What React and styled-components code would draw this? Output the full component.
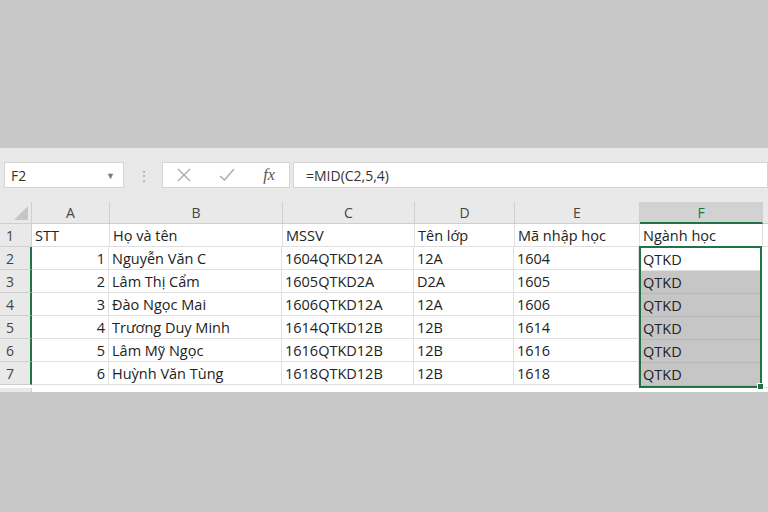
import styled, { createGlobalStyle } from "styled-components";

const Global = createGlobalStyle`
  body { margin: 0; background: #c8c8c8; font-family: "Open Sans", "Liberation Sans", sans-serif; }
`;

const cols = [
  { k: "A", w: 78 },
  { k: "B", w: 173 },
  { k: "C", w: 132 },
  { k: "D", w: 100 },
  { k: "E", w: 125 },
  { k: "F", w: 123 },
  { k: "", w: 40 },
];

const rows = [
  ["STT", "Họ và tên", "MSSV", "Tên lớp", "Mã nhập học", "Ngành học"],
  ["1", "Nguyễn Văn C", "1604QTKD12A", "12A", "1604", "QTKD"],
  ["2", "Lâm Thị Cẩm", "1605QTKD2A", "D2A", "1605", "QTKD"],
  ["3", "Đào Ngọc Mai", "1606QTKD12A", "12A", "1606", "QTKD"],
  ["4", "Trương Duy Minh", "1614QTKD12B", "12B", "1614", "QTKD"],
  ["5", "Lâm Mỹ Ngọc", "1616QTKD12B", "12B", "1616", "QTKD"],
  ["6", "Huỳnh Văn Tùng", "1618QTKD12B", "12B", "1618", "QTKD"],
];

const Page = styled.div`
  height: 512px;
  display: flex;
  flex-direction: column;
  padding-top: 148px;
  box-sizing: border-box;
`;
const Sheet = styled.div`
  background: #e9e9e9;
  height: 244px;
  overflow: hidden;
`;
const Toolbar = styled.div`
  display: flex;
  align-items: center;
  height: 26px;
  margin: 14px 0 14px 4px;
  gap: 3px;
`;
const NameBox = styled.div`
  width: 120px;
  height: 26px;
  background: #fff;
  border: 1px solid #d4d4d4;
  box-sizing: border-box;
  display: flex;
  align-items: center;
  justify-content: space-between;
  padding: 0 8px 0 6px;
  font-size: 14px;
  color: #333;
`;
const Dots = styled.div`
  width: 32px;
  text-align: center;
  color: #aaa;
  font-size: 14px;
  letter-spacing: -2px;
`;
const IconBox = styled.div`
  width: 128px;
  height: 26px;
  background: #fff;
  border: 1px solid #d4d4d4;
  box-sizing: border-box;
  display: flex;
  align-items: center;
  justify-content: space-around;
  color: #999;
`;
const Fx = styled.span`
  font-family: "Liberation Serif", serif;
  font-style: italic;
  color: #555;
  font-size: 16px;
`;
const Formula = styled.div`
  flex: 1;
  height: 26px;
  background: #fff;
  border: 1px solid #d4d4d4;
  box-sizing: border-box;
  display: flex;
  align-items: center;
  padding-left: 12px;
  font-size: 14px;
  color: #333;
`;
const Grid = styled.div`
  background: #fff;
`;
const Row = styled.div`
  display: flex;
  height: ${(p) => p.h}px;
`;
const Head = styled.div`
  width: ${(p) => p.w}px;
  flex: none;
  box-sizing: border-box;
  background: ${(p) => (p.sel ? "#d2d2d2" : "#e9e9e9")};
  color: ${(p) => (p.sel ? "#217346" : "#444")};
  border-right: 1px solid #cfcfcf;
  border-bottom: ${(p) => (p.sel ? "2px solid #217346" : "1px solid #cfcfcf")};
  display: flex;
  align-items: center;
  justify-content: ${(p) => (p.left ? "flex-start" : "center")};
  padding-left: ${(p) => (p.left ? 6 : 0)}px;
  font-size: 14px;
`;
const Corner = styled(Head)`
  position: relative;
  &::after {
    content: "";
    position: absolute;
    right: 3px;
    bottom: 3px;
    border-left: 14px solid transparent;
    border-bottom: 14px solid #c6c6c6;
  }
`;
const Cell = styled.div`
  width: ${(p) => p.w}px;
  flex: none;
  box-sizing: border-box;
  border-right: 1px solid #e0e0e0;
  border-bottom: 1px solid #e0e0e0;
  background: ${(p) => (p.shade ? "#c6c6c6" : "#fff")};
  display: flex;
  align-items: center;
  justify-content: ${(p) => (p.right ? "flex-end" : "flex-start")};
  padding: 0 3px;
  font-size: 14.5px;
  color: #222;
  white-space: nowrap;
`;
const Sel = styled.div`
  position: relative;
  width: 123px;
  flex: none;
  border: 2px solid #217346;
  box-sizing: border-box;
  margin-top: -1px;
  &::after {
    content: "";
    position: absolute;
    right: -4px;
    bottom: -4px;
    width: 5px;
    height: 5px;
    background: #217346;
    border: 1px solid #fff;
  }
`;
const SelCell = styled.div`
  height: 23px;
  background: ${(p) => (p.shade ? "#c6c6c6" : "#fff")};
  border-bottom: 1px solid ${(p) => (p.shade ? "#b8b8b8" : "#e0e0e0")};
  box-sizing: border-box;
  display: flex;
  align-items: center;
  padding-left: 2px;
  font-size: 14.5px;
  color: #222;
`;
const Body = styled.div`
  display: flex;
`;
const Left = styled.div``;

export default function App() {
  return (
    <>
      <Global />
      <Page>
        <Sheet>
          <Toolbar>
            <NameBox>
              <span>F2</span>
              <span style={{ fontSize: 9, color: "#777" }}>▼</span>
            </NameBox>
            <Dots>⋮</Dots>
            <IconBox>
              <svg width="14" height="14" viewBox="0 0 14 14" stroke="#aaa" strokeWidth="1.4">
                <path d="M1 1L13 13M13 1L1 13" />
              </svg>
              <svg width="16" height="14" viewBox="0 0 16 14" stroke="#aaa" strokeWidth="1.4" fill="none">
                <path d="M1 8L5.5 12L15 1" />
              </svg>
              <Fx>fx</Fx>
            </IconBox>
            <Formula>=MID(C2,5,4)</Formula>
          </Toolbar>
          <Grid>
            <Row h={22}>
              <Corner w={32} />
              {cols.map((c) => (
                <Head key={c.k} w={c.w} sel={c.k === "F"}>
                  {c.k}
                </Head>
              ))}
            </Row>
            <Row h={23}>
              <Head w={32} left>1</Head>
              {rows[0].map((v, i) => (
                <Cell key={i} w={cols[i].w}>{v}</Cell>
              ))}
              <Cell w={40} />
            </Row>
            <Body>
              <Left>
                {rows.slice(1).map((r, ri) => (
                  <Row h={23} key={ri}>
                    <Head w={32} left sel={false} style={{ borderRight: "2px solid #217346" }}>
                      {ri + 2}
                    </Head>
                    {r.slice(0, 5).map((v, i) => (
                      <Cell key={i} w={cols[i].w - (i === 0 ? 1 : 0)} right={i === 0}>
                        {v}
                      </Cell>
                    ))}
                  </Row>
                ))}
              </Left>
              <Sel>
                {rows.slice(1).map((r, ri) => (
                  <SelCell key={ri} shade={ri > 0}>{r[5]}</SelCell>
                ))}
              </Sel>
              <Cell w={40} />
            </Body>
            <Row h={6}>
              <Head w={32} left />
            </Row>
          </Grid>
        </Sheet>
      </Page>
    </>
  );
}
